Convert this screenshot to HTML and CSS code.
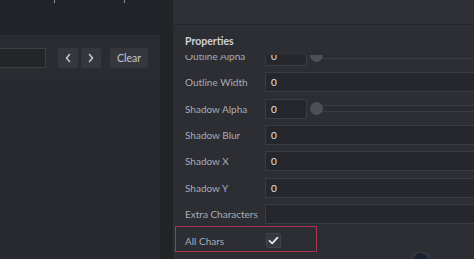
FILE: index.html
```html
<html>

<head>
    <meta charset="UTF-8">
    <title>Properties</title>
    <link rel="stylesheet" href="styles.css">
</head>

<body>
    <div class="left">
        <div class="left-top">
            <span class="tick"></span>
            <span class="tick"></span>
        </div>
        <div class="toolbar">
            <div class="search"></div>
            <button class="btn btn-icon" type="button">
                <svg width="8" height="10" viewBox="0 0 8 10"><path d="M5.5 1.5 L2.5 5 L5.5 8.5" /></svg>
            </button>
            <button class="btn btn-icon" type="button">
                <svg width="8" height="10" viewBox="0 0 8 10"><path d="M2.5 1.5 L5.5 5 L2.5 8.5" /></svg>
            </button>
            <button class="btn btn-clear" type="button">Clear</button>
        </div>
        <div class="left-body"></div>
    </div>

    <div class="gutter"></div>

    <div class="right">
        <div class="right-top"></div>
        <div class="props">
            <div class="props-title">Properties</div>
            <div class="props-list">
                <div class="row first">
                    <span class="label">Outline Alpha</span>
                    <span class="field short">0</span>
                    <span class="slider"><span class="knob"></span><span class="track"></span></span>
                </div>
                <div class="row">
                    <span class="label">Outline Width</span>
                    <span class="field">0</span>
                </div>
                <div class="row">
                    <span class="label">Shadow Alpha</span>
                    <span class="field short">0</span>
                    <span class="slider"><span class="knob"></span><span class="track"></span></span>
                </div>
                <div class="row">
                    <span class="label">Shadow Blur</span>
                    <span class="field">0</span>
                </div>
                <div class="row">
                    <span class="label">Shadow X</span>
                    <span class="field">0</span>
                </div>
                <div class="row">
                    <span class="label">Shadow Y</span>
                    <span class="field">0</span>
                </div>
                <div class="row">
                    <span class="label">Extra Characters</span>
                    <span class="field"></span>
                </div>
                <div class="row marked">
                    <span class="label">All Chars</span>
                    <span class="checkbox">
                        <svg width="11" height="9" viewBox="0 0 11 9"><path d="M1.5 4.8 L4.2 7.3 L9.5 1.6" /></svg>
                    </span>
                    <span class="highlight"></span>
                </div>
            </div>
            <span class="blob"></span>
        </div>
    </div>
</body>

</html>
```

FILE: styles.css
```css
:root {
    --left-top-bg: #222429;
    --toolbar-bg: #2a2c31;
    --left-bg: #27292e;
    --gutter-bg: #212327;

    --panel-bg: #2c2e33;
    --panel-top-bg: #2e3036;

    --field-bg: #25272c;
    --field-border: #3a3c42;

    --btn-bg: #35373c;
    --btn-text: #c3c7cf;

    --label-color: #a7adb8;
    --title-color: #cdd1d8;
    --value-color: #e4e6ea;

    --mark-color: #ad3450;
}

body {
    width: 474px;
    height: 259px;
    margin: 0;
    overflow: hidden;
    display: flex;
    font-family: Lato, "Open Sans", sans-serif;
    font-size: 10px;
}

.left {
    width: 160px;
    display: flex;
    flex-direction: column;
    background: var(--left-bg);
}

.left-top {
    height: 35px;
    background: var(--left-top-bg);
    display: flex;
    align-items: flex-start;
}

.tick {
    width: 1px;
    height: 3px;
    margin-left: 54px;
    background: #8a8d94;
}

.tick + .tick {
    margin-left: 69px;
}

.toolbar {
    height: 45px;
    background: var(--toolbar-bg);
    display: flex;
    align-items: center;
}

.search {
    width: 45px;
    height: 18px;
    margin-left: -1px;
    margin-right: 12px;
    background: #232529;
    border: 1px solid #3c3e43;
}

.btn {
    height: 20px;
    border: 0;
    padding: 0;
    border-radius: 2px;
    background: var(--btn-bg);
    color: var(--btn-text);
    font-family: Lato, "Open Sans", sans-serif;
    font-size: 10.5px;
    display: flex;
    align-items: center;
    justify-content: center;
}

.btn-icon {
    width: 20px;
    margin-right: 3px;
}

.btn-icon svg path {
    fill: none;
    stroke: var(--btn-text);
    stroke-width: 1.6;
    stroke-linecap: round;
    stroke-linejoin: round;
}

.btn-clear {
    width: 38px;
    margin-left: 6px;
}

.left-body {
    flex-grow: 1;
}

.gutter {
    width: 13px;
    background: var(--gutter-bg);
}

.right {
    flex-grow: 1;
    display: flex;
    flex-direction: column;
    background: var(--panel-bg);
}

.right-top {
    height: 24px;
    background: var(--panel-top-bg);
    border-bottom: 1px solid #24262a;
}

.props {
    flex-grow: 1;
    position: relative;
    display: flex;
    flex-direction: column;
    min-height: 0;
}

.props-title {
    height: 30px;
    box-sizing: border-box;
    padding: 9px 0 0 12px;
    line-height: 14px;
    font-size: 10.5px;
    color: var(--title-color);
    font-weight: bold;
    position: relative;
    z-index: 1;
    background: var(--panel-bg);
}

.props-list {
    flex-grow: 1;
    overflow: hidden;
    padding-left: 12px;
}

.row {
    height: 26.4px;
    display: flex;
    align-items: center;
    position: relative;
}

.row.first {
    margin-top: -12.4px;
}

.label {
    width: 80px;
    flex-shrink: 0;
    color: var(--label-color);
    white-space: nowrap;
}

.field {
    flex-grow: 1;
    height: 20px;
    box-sizing: border-box;
    padding-left: 5px;
    line-height: 18px;
    background: var(--field-bg);
    border: 1px solid var(--field-border);
    border-right: 0;
    color: var(--value-color);
}

.field.short {
    flex-grow: 0;
    width: 42px;
    border-right: 1px solid var(--field-border);
}

.slider {
    flex-grow: 1;
    display: flex;
    align-items: center;
    margin-left: 3px;
}

.knob {
    width: 13px;
    height: 13px;
    border-radius: 50%;
    background: #4d4f55;
    flex-shrink: 0;
}

.track {
    flex-grow: 1;
    height: 5px;
    background: #2a2c31;
    border-top: 1px solid var(--field-border);
    border-bottom: 1px solid var(--field-border);
}

.checkbox {
    width: 15px;
    height: 15px;
    box-sizing: border-box;
    margin-left: 1px;
    border: 1px solid #414349;
    border-radius: 2px;
    background: #35373d;
    display: flex;
    align-items: center;
    justify-content: center;
}

.checkbox svg path {
    fill: none;
    stroke: #e8e9ec;
    stroke-width: 1.8;
    stroke-linecap: round;
    stroke-linejoin: round;
}

.highlight {
    position: absolute;
    left: -10px;
    top: -1.4px;
    width: 142px;
    height: 26px;
    box-sizing: border-box;
    border: 1.5px solid var(--mark-color);
}

.blob {
    position: absolute;
    left: 240px;
    bottom: -9px;
    width: 15px;
    height: 15px;
    border-radius: 50%;
    background: #1d2030;
    box-shadow: 0 0 4px rgba(130, 140, 170, 0.35);
}
```
